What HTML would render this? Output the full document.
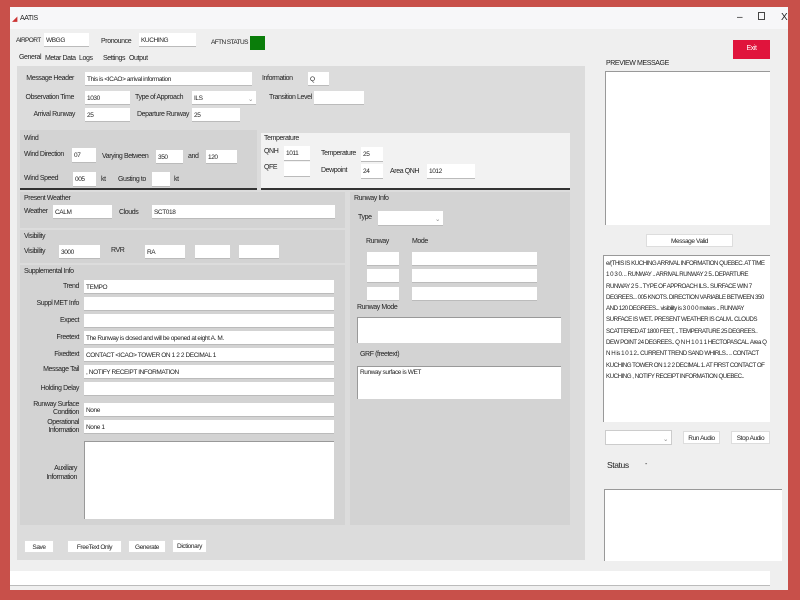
<!DOCTYPE html>
<html><head><meta charset="utf-8"><style>
*{box-sizing:border-box;margin:0;padding:0}
body{width:800px;height:600px;background:#c8504a;position:relative;overflow:hidden;font-family:"Liberation Sans",sans-serif;font-size:7px;color:#222;letter-spacing:-0.4px}
.a{position:absolute;white-space:nowrap}
.i{position:absolute;background:#fff;border-bottom:1px solid #bbb;padding:4px 2px 0;font-size:6.5px;white-space:nowrap;overflow:hidden}
.t{position:absolute;background:#fff;border:1px solid #999;border-right:none;border-bottom:none;font-size:6.5px;padding:2px}
.r{text-align:right}
.b{position:absolute;background:#fff;border:1px solid #ddd;text-align:center;font-size:6.5px;padding-top:3px}
.g{position:absolute;background:#d3d3d3}
</style></head><body>
<div class="a" style="left:10px;top:7px;width:778px;height:583px;background:#efefef"></div>
<div class="a" style="left:10px;top:7px;width:778px;height:22px;background:#f7f7f9"></div>
<div class="a" style="left:12px;top:15px;color:#c33;font-size:7px">◢</div>
<div class="a" style="left:20px;top:15px">AATIS</div>
<div class="a" style="left:737px;top:12px;font-size:10px">–</div>
<div class="a" style="left:758px;top:12px;width:7px;height:8px;border:1px solid #444"></div>
<div class="a" style="left:781px;top:12px;font-size:10px">X</div>

<div class="a" style="left:16px;top:37px;font-size:6.5px;letter-spacing:-0.6px">AIRPORT</div>
<div class="i" style="left:44px;top:33px;width:45px;height:14px">WBGG</div>
<div class="a" style="left:101px;top:38px">Pronounce</div>
<div class="i" style="left:139px;top:33px;width:57px;height:14px">KUCHING</div>
<div class="a" style="left:211px;top:39px;font-size:6.5px;letter-spacing:-0.6px">AFTN STATUS</div>
<div class="a" style="left:250px;top:36px;width:15px;height:14px;background:#0a7d0a"></div>
<div class="a" style="left:19px;top:54px">General</div>
<div class="a" style="left:45px;top:55px">Metar Data</div>
<div class="a" style="left:79px;top:55px">Logs</div>
<div class="a" style="left:103px;top:55px">Settings</div>
<div class="a" style="left:129px;top:55px">Output</div>

<div class="a" style="left:17px;top:66px;width:568px;height:494px;background:#dcdcdc"></div>
<div class="a r" style="left:20px;top:75px;width:54px">Message Header</div>
<div class="i" style="left:85px;top:72px;width:167px;height:14px">This is &lt;ICAO&gt; arrival information</div>
<div class="a" style="left:262px;top:75px">Information</div>
<div class="i" style="left:308px;top:72px;width:21px;height:14px">Q</div>
<div class="a r" style="left:20px;top:94px;width:54px">Observation Time</div>
<div class="i" style="left:85px;top:91px;width:45px;height:14px">1030</div>
<div class="a" style="left:135px;top:94px">Type of Approach</div>
<div class="i" style="left:192px;top:91px;width:64px;height:14px">ILS<span style="position:absolute;right:3px;color:#888">⌄</span></div>
<div class="a" style="left:269px;top:94px">Transition Level</div>
<div class="i" style="left:314px;top:91px;width:50px;height:14px"></div>
<div class="a r" style="left:20px;top:111px;width:55px">Arrival Runway</div>
<div class="i" style="left:85px;top:108px;width:45px;height:14px">25</div>
<div class="a" style="left:137px;top:111px">Departure Runway</div>
<div class="i" style="left:192px;top:108px;width:48px;height:14px">25</div>

<div class="g" style="left:20px;top:130px;width:237px;height:58px"></div>
<div class="a" style="left:24px;top:135px">Wind</div>
<div class="a" style="left:24px;top:151px">Wind Direction</div>
<div class="i" style="left:72px;top:148px;width:24px;height:15px">07</div>
<div class="a" style="left:102px;top:153px">Varying Between</div>
<div class="i" style="left:156px;top:150px;width:27px;height:14px">350</div>
<div class="a" style="left:188px;top:153px">and</div>
<div class="i" style="left:206px;top:150px;width:31px;height:14px">120</div>
<div class="a" style="left:24px;top:175px">Wind Speed</div>
<div class="i" style="left:73px;top:172px;width:23px;height:15px">005</div>
<div class="a" style="left:101px;top:176px">kt</div>
<div class="a" style="left:118px;top:176px">Gusting to</div>
<div class="i" style="left:152px;top:172px;width:18px;height:15px"></div>
<div class="a" style="left:174px;top:176px">kt</div>
<div class="a" style="left:20px;top:188px;width:237px;height:2px;background:#333"></div>

<div class="a" style="left:261px;top:133px;width:309px;height:55px;background:#f2f2f2"></div>
<div class="a" style="left:264px;top:135px">Temperature</div>
<div class="a" style="left:264px;top:148px">QNH</div>
<div class="i" style="left:284px;top:146px;width:26px;height:15px">1011</div>
<div class="a" style="left:264px;top:164px">QFE</div>
<div class="i" style="left:284px;top:162px;width:26px;height:15px"></div>
<div class="a" style="left:321px;top:150px">Temperature</div>
<div class="i" style="left:361px;top:147px;width:22px;height:15px">25</div>
<div class="a" style="left:321px;top:167px">Dewpoint</div>
<div class="i" style="left:361px;top:164px;width:22px;height:15px">24</div>
<div class="a" style="left:390px;top:168px">Area QNH</div>
<div class="i" style="left:427px;top:164px;width:48px;height:15px">1012</div>
<div class="a" style="left:261px;top:188px;width:309px;height:2px;background:#333"></div>

<div class="g" style="left:20px;top:192px;width:325px;height:36px"></div>
<div class="a" style="left:24px;top:195px">Present Weather</div>
<div class="a" style="left:24px;top:208px">Weather</div>
<div class="i" style="left:53px;top:205px;width:59px;height:14px">CALM</div>
<div class="a" style="left:119px;top:209px">Clouds</div>
<div class="i" style="left:152px;top:205px;width:183px;height:14px">SCT018</div>
<div class="g" style="left:20px;top:230px;width:325px;height:33px"></div>
<div class="a" style="left:24px;top:233px">Visibility</div>
<div class="a" style="left:24px;top:248px">Visibility</div>
<div class="i" style="left:59px;top:245px;width:41px;height:14px">3000</div>
<div class="a" style="left:111px;top:247px">RVR</div>
<div class="i" style="left:145px;top:245px;width:40px;height:14px">RA</div>
<div class="i" style="left:195px;top:245px;width:35px;height:14px"></div>
<div class="i" style="left:239px;top:245px;width:40px;height:14px"></div>

<div class="g" style="left:20px;top:265px;width:325px;height:260px"></div>
<div class="a" style="left:24px;top:268px">Supplemental Info</div>
<div class="a r" style="left:20px;top:283px;width:59px">Trend</div><div class="i" style="left:84px;top:280px;width:250px;height:14px">TEMPO</div>
<div class="a r" style="left:20px;top:300px;width:59px">Suppl MET Info</div><div class="i" style="left:84px;top:297px;width:250px;height:14px"></div>
<div class="a r" style="left:20px;top:317px;width:59px">Expect</div><div class="i" style="left:84px;top:314px;width:250px;height:14px"></div>
<div class="a r" style="left:20px;top:334px;width:59px">Freetext</div><div class="i" style="left:84px;top:331px;width:250px;height:14px">The Runway is closed and will be opened at eight A. M.</div>
<div class="a r" style="left:20px;top:351px;width:59px">Fixedtext</div><div class="i" style="left:84px;top:348px;width:250px;height:14px">CONTACT &lt;ICAO&gt; TOWER ON 1 2 2 DECIMAL 1</div>
<div class="a r" style="left:20px;top:366px;width:59px">Message Tail</div><div class="i" style="left:84px;top:365px;width:250px;height:14px">, NOTIFY RECEIPT INFORMATION</div>
<div class="a r" style="left:20px;top:385px;width:59px">Holding Delay</div><div class="i" style="left:84px;top:382px;width:250px;height:14px"></div>
<div class="a r" style="left:20px;top:401px;width:59px;line-height:8px">Runway Surface<br>Condition</div><div class="i" style="left:84px;top:403px;width:250px;height:14px">None</div>
<div class="a r" style="left:20px;top:419px;width:59px;line-height:8px">Operational<br>Information</div><div class="i" style="left:84px;top:420px;width:250px;height:14px">None 1</div>
<div class="a r" style="left:20px;top:464px;width:57px;line-height:9px">Auxiliary<br>Information</div>
<div class="t" style="left:84px;top:441px;width:250px;height:78px"></div>

<div class="g" style="left:350px;top:192px;width:220px;height:333px"></div>
<div class="a" style="left:354px;top:195px">Runway Info</div>
<div class="a" style="left:358px;top:214px">Type</div>
<div class="i" style="left:378px;top:211px;width:65px;height:15px"><span style="position:absolute;right:3px;color:#888">⌄</span></div>
<div class="a" style="left:366px;top:238px">Runway</div>
<div class="a" style="left:412px;top:238px">Mode</div>
<div class="i" style="left:367px;top:252px;width:32px;height:14px"></div><div class="i" style="left:412px;top:252px;width:125px;height:14px"></div>
<div class="i" style="left:367px;top:269px;width:32px;height:14px"></div><div class="i" style="left:412px;top:269px;width:125px;height:14px"></div>
<div class="i" style="left:367px;top:287px;width:32px;height:14px"></div><div class="i" style="left:412px;top:287px;width:125px;height:14px"></div>
<div class="a" style="left:357px;top:304px">Runway Mode</div>
<div class="t" style="left:357px;top:317px;width:204px;height:26px"></div>
<div class="a" style="left:360px;top:351px">GRF (freetext)</div>
<div class="t" style="left:357px;top:366px;width:204px;height:33px">Runway surface is WET</div>

<div class="b" style="left:24px;top:540px;width:30px;height:13px">Save</div>
<div class="b" style="left:67px;top:540px;width:55px;height:13px">FreeText Only</div>
<div class="b" style="left:128px;top:540px;width:38px;height:13px">Generate</div>
<div class="b" style="left:172px;top:539px;width:35px;height:14px">Dictionary</div>
<div class="a" style="left:10px;top:571px;width:760px;height:15px;background:#fff;border-bottom:1px solid #bbb"></div>

<div class="a" style="left:733px;top:40px;width:37px;height:19px;background:#e0143c;color:#fff;text-align:center;padding-top:5px;font-size:7px">Exit</div>
<div class="a" style="left:606px;top:60px">PREVIEW MESSAGE</div>
<div class="t" style="left:605px;top:71px;width:165px;height:154px"></div>
<div class="b" style="left:646px;top:234px;width:87px;height:13px">Message Valid</div>
<div class="t" style="left:603px;top:255px;width:167px;height:167px;white-space:normal;line-height:11.3px;font-size:6.2px;letter-spacing:-0.5px">e/(THIS IS KUCHING ARRIVAL INFORMATION QUEBEC. AT TIME 1 0 3 0. .. RUNWAY .. ARRIVAL RUNWAY 2 5.. DEPARTURE RUNWAY 2 5 .. TYPE OF APPROACH ILS.. SURFACE WIN 7 DEGREES... 005 KNOTS. DIRECTION VARIABLE BETWEEN 350 AND 120 DEGREES... visibility is 3 0 0 0 meters .. RUNWAY SURFACE IS WET.. PRESENT WEATHER IS CALM.. CLOUDS SCATTERED AT 1800 FEET, .. TEMPERATURE 25 DEGREES.. DEW POINT 24 DEGREES.. Q N H 1 0 1 1 HECTOPASCAL. Area Q N H is 1 0 1 2.. CURRENT TREND SAND WHIRLS.. .. CONTACT KUCHING TOWER ON 1 2 2 DECIMAL 1. AT FIRST CONTACT OF KUCHING , NOTIFY RECEIPT INFORMATION QUEBEC..</div>
<div class="i" style="left:605px;top:430px;width:67px;height:15px;border:1px solid #ccc"><span style="position:absolute;right:3px;color:#888">⌄</span></div>
<div class="b" style="left:683px;top:431px;width:37px;height:13px">Run Audio</div>
<div class="b" style="left:731px;top:431px;width:39px;height:13px">Stop Audio</div>
<div class="a" style="left:607px;top:460px;font-size:8.5px">Status</div>
<div class="a" style="left:645px;top:461px">-</div>
<div class="t" style="left:604px;top:489px;width:178px;height:72px"></div>
</body></html>
